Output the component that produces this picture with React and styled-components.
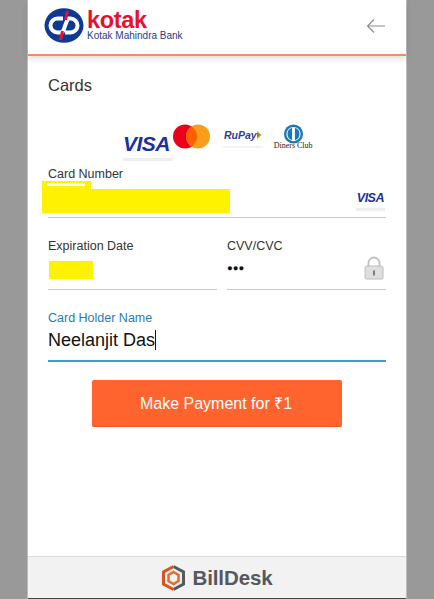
import React from "react";
import styled, { createGlobalStyle } from "styled-components";

const Global = createGlobalStyle`
  html, body { margin: 0; padding: 0; height: 100%; background: #999; overflow: hidden; }
  #root { height: 100%; }
  * { box-sizing: border-box; }
`;
const Page = styled.div`
  width: 434px; height: 599px; padding-left: 27px; background: #999;
  font-family: "Liberation Sans", Arial, sans-serif; color: #333;
`;
const Panel = styled.div`
  width: 380px; height: 599px; background: #fff; display: flex; flex-direction: column;
  border-left: 1px solid #bdbdbd; border-right: 1px solid #bdbdbd;
`;
const Header = styled.header`
  height: 56px; flex: none; display: flex; align-items: center; justify-content: space-between;
  padding: 0 20px 3px 16px; border-bottom: 2px solid #f58a63;
  box-shadow: 0 3px 6px rgba(0,0,0,.12); position: relative;
`;
const Brand = styled.div`display: flex; align-items: center; gap: 3px;`;
const BrandText = styled.div`display: flex; flex-direction: column;`;
const BrandName = styled.div`
  font: bold 23.500px/19px "Liberation Sans", Arial, sans-serif; color: #e8112d; letter-spacing: -0.300px;
`;
const BrandSub = styled.div`font-size: 10px; line-height: 10px; color: #27408b; margin-top: 1px; white-space: nowrap;`;
const Main = styled.main`flex: 1; padding: 19px 20px 0 20px; display: flex; flex-direction: column;`;
const Title = styled.h1`font-size: 16.500px; line-height: 20px; font-weight: 400; margin: 0; color: #333;`;
const Logos = styled.div`display: flex; align-items: flex-start; margin: 29px 0 0 75px; height: 43px;`;
const Visa = styled.span`
  font: italic bold ${p => p.$size}px/1 "Liberation Sans", Arial, sans-serif; color: #1a2fa0;
  letter-spacing: -0.500px; display: inline-block; padding: ${p => p.$pad};
  margin-top: ${p => p.$top || 0}px; border-bottom: 3px solid #eeeeee;
`;
const RuPay = styled.span`
  font: italic bold 10.500px/1 "Liberation Sans", Arial, sans-serif; color: #2c3f8f;
  display: inline-flex; align-items: center; margin: 6px 0 0 13px; padding: 0 1px 5px; border-bottom: 2px solid #f2f2f2;
`;
const Diners = styled.div`display: flex; flex-direction: column; align-items: center; margin-left: 11px;`;
const DinersText = styled.span`font: 8px/8px "Liberation Serif", serif; color: #222; margin-top: -4px; white-space: nowrap;`;
const Field = styled.div`
  position: relative; height: 51px;
  border-bottom: ${p => p.$active ? "2px solid #3d9fc4" : "1px solid #c9c9c9"};
`;
const Label = styled.label`
  display: block; font-size: 12.500px; line-height: 14px; color: ${p => p.$active ? "#2480ab" : "#333"};
`;
const Row = styled.div`display: grid; grid-template-columns: 169px 159px; column-gap: 10px; margin-top: 21px;`;
const Value = styled.div`font-size: 18px; line-height: 22px; color: #111; margin-top: 4px; display: flex; align-items: center;`;
const Dots = styled.div`font-size: 9.500px; line-height: 14px; color: #111; margin-top: 8px;`;
const Caret = styled.span`display: inline-block; width: 1px; height: 20px; background: #111;`;
const RedactTab = styled.div`
  position: absolute; left: -6px; top: 14px; width: 49px; height: 9px; background: #fff200;
  &::after { content: ""; position: absolute; left: 5px; top: 2px; width: 38px; height: 3px; background: #fff; }
`;
const RedactBar = styled.div`position: absolute; left: -6px; top: 22px; width: 188px; height: 24px; background: #fff200;`;
const RedactDate = styled.div`position: absolute; left: 1px; top: 22px; width: 44px; height: 18px; background: #fff200;`;
const TrailIcon = styled.div`position: absolute; right: ${p => p.$r}px; top: ${p => p.$t}px;`;
const HolderField = styled(Field)`margin-top: 21px;`;
const Action = styled.div`display: flex; justify-content: center; margin-top: 18px;`;
const PayButton = styled.button`
  width: 250px; height: 47px; background: #ff642f; color: #fff; border: 0; border-radius: 2px;
  border-bottom: 1px solid #e8572a; font: 16px "Liberation Sans", Arial, sans-serif; padding: 0 2px 0 0;
`;
const Footer = styled.footer`
  flex: none; height: 43px; background: #f2f2f2; border-top: 1px solid #d9d9d9; border-bottom: 1px solid #444;
  display: flex; align-items: center; justify-content: center; gap: 6px; padding-top: 1px;
`;
const BillDesk = styled.span`font: bold 20.500px/1 "Liberation Sans", Arial, sans-serif; color: #55585c; letter-spacing: -0.100px;`;

const KotakMark = () => (
  <svg width="40" height="35" viewBox="0 0 40 35" aria-hidden="true">
    <ellipse cx="20" cy="17.500" rx="19.500" ry="17.300" fill="#0f3a94" />
    <path d="M19 10.500H13.500a7 7 0 0 0 0 14H16q3 0 4-3.500t4-10.500H26.500a7 7 0 0 1 0 14H21" fill="none" stroke="#fff" strokeWidth="4" />
    <path d="M23.500 3 21.500 12M18.500 23 16.500 32" stroke="#e8112d" strokeWidth="3" />
  </svg>
);
const BackArrow = () => (
  <svg width="20" height="16" viewBox="0 0 20 16" aria-hidden="true">
    <path d="M19 8H1.500M8 1.500 1.500 8 8 14.500" fill="none" stroke="#8a8a8a" strokeWidth="1.100" />
  </svg>
);
const Mastercard = () => (
  <svg width="37" height="25" viewBox="0 0 37 25" aria-hidden="true">
    <circle cx="12" cy="12.500" r="12" fill="#eb001b" />
    <circle cx="25" cy="12.500" r="12" fill="#f79e1b" />
    <path d="M18.500 2.400a12 12 0 0 1 0 20.200 12 12 0 0 1 0-20.200z" fill="#ff5f00" />
  </svg>
);
const DinersMark = () => (
  <svg width="21" height="22" viewBox="0 0 22 22" aria-hidden="true">
    <circle cx="11" cy="10" r="10" fill="#1b78b8" />
    <circle cx="11" cy="10" r="7.500" fill="#fff" />
    <path d="M9.500 3.500a6.800 6.800 0 0 0 0 13zM12.500 3.500a6.800 6.800 0 0 1 0 13z" fill="#1b78b8" />
  </svg>
);
const RuPayArrow = () => (
  <svg width="5" height="8" viewBox="0 0 5 8" aria-hidden="true">
    <path d="M0 0 4.500 4 0 8z" fill="#e8842c" />
    <path d="M0 2 2.500 4 0 6z" fill="#3f9c46" />
  </svg>
);
const Lock = () => (
  <svg width="20" height="24" viewBox="0 0 20 24" aria-hidden="true">
    <path d="M4.500 11V7a5.500 5.500 0 0 1 11 0v4" fill="none" stroke="#c0c0c0" strokeWidth="1.800" />
    <rect x="1" y="10" width="18" height="13" rx="1.500" fill="#dedede" stroke="#bdbdbd" />
    <path d="M10 14.500v5" stroke="#666" strokeWidth="1.600" />
  </svg>
);
const BillDeskMark = () => (
  <svg width="25" height="26" viewBox="0 0 25 26" aria-hidden="true">
    <path d="M12.500 1.500 22.500 7v12l-10 5.500" fill="none" stroke="#55585c" strokeWidth="3" />
    <path d="M12.500 1.500 2.500 7v12l10 5.500" fill="none" stroke="#d9531e" strokeWidth="3" />
    <path d="M12.500 7 17.500 10v6l-5 3-5-3v-6z" fill="none" stroke="#e8692e" strokeWidth="2.500" />
  </svg>
);

export default function App() {
  return (
    <Page>
      <Global />
      <Panel>
        <Header>
          <Brand>
            <KotakMark />
            <BrandText>
              <BrandName>kotak</BrandName>
              <BrandSub>Kotak Mahindra Bank</BrandSub>
            </BrandText>
          </Brand>
          <BackArrow />
        </Header>
        <Main>
          <Title>Cards</Title>
          <Logos>
            <Visa $size={21} $pad="0 3px 4px 0" $top={9}>VISA</Visa>
            <Mastercard />
            <RuPay>RuPay<RuPayArrow /></RuPay>
            <Diners>
              <DinersMark />
              <DinersText>Diners Club</DinersText>
            </Diners>
          </Logos>
          <Field>
            <Label>Card Number</Label>
            <RedactTab />
            <RedactBar />
            <TrailIcon $r={1} $t={21}><Visa $size={12.500} $pad="1px 1px 3px">VISA</Visa></TrailIcon>
          </Field>
          <Row>
            <Field>
              <Label>Expiration Date</Label>
              <RedactDate />
            </Field>
            <Field>
              <Label>CVV/CVC</Label>
              <Dots>●●●</Dots>
              <TrailIcon $r={2} $t={17}><Lock /></TrailIcon>
            </Field>
          </Row>
          <HolderField $active>
            <Label $active>Card Holder Name</Label>
            <Value>Neelanjit Das<Caret /></Value>
          </HolderField>
          <Action><PayButton>Make Payment for ₹1</PayButton></Action>
        </Main>
        <Footer>
          <BillDeskMark />
          <BillDesk>BillDesk</BillDesk>
        </Footer>
      </Panel>
    </Page>
  );
}
